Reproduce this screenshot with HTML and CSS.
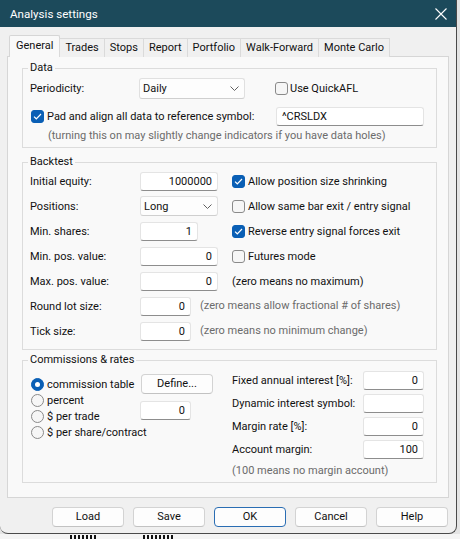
FILE: index.html
```html
<!DOCTYPE html>
<html>
<head>
<meta charset="utf-8">
<title>Analysis settings</title>
<link rel="stylesheet" href="styles.css">
</head>
<body>
<div class="window">
  <div class="titlebar">
    <span class="title">Analysis settings</span>
    <svg class="close" width="12" height="12" viewBox="0 0 12 12"><path d="M0.5 0.5L11.5 11.5M11.5 0.5L0.5 11.5" stroke="#ffffff" stroke-width="1.1" fill="none"/></svg>
  </div>
  <div class="client">
    <div class="tabs">
      <div class="tab active">General</div>
      <div class="tab">Trades</div>
      <div class="tab">Stops</div>
      <div class="tab">Report</div>
      <div class="tab">Portfolio</div>
      <div class="tab">Walk-Forward</div>
      <div class="tab">Monte Carlo</div>
    </div>
    <div class="panel">
      <fieldset class="group group-data">
        <legend>Data</legend>
        <div class="row r-period">
          <span class="lbl">Periodicity:</span>
          <div class="select w106"><span>Daily</span><svg class="chev" width="9" height="5" viewBox="0 0 9 5"><path d="M0.5 0.5L4.5 4.5L8.5 0.5" stroke="#606060" fill="none" stroke-width="1"/></svg></div>
          <label class="check quick"><span class="box"></span>Use QuickAFL</label>
        </div>
        <div class="row r-pad">
          <label class="check pad"><span class="box on"><svg width="9" height="7" viewBox="0 0 9 7"><path d="M1 3.6L3.3 5.8L8 1" stroke="#fff" stroke-width="1.2" fill="none"/></svg></span>Pad and align all data to reference symbol:</label>
          <div class="input w148 tleft">^CRSLDX</div>
        </div>
        <div class="hint hint-pad">(turning this on may slightly change indicators if you have data holes)</div>
      </fieldset>

      <fieldset class="group group-backtest">
        <legend>Backtest</legend>
        <div class="rows">
          <div class="brow">
            <span class="lbl">Initial equity:</span>
            <div class="cell"><div class="input w78">1000000</div></div>
            <label class="check"><span class="box on"><svg width="9" height="7" viewBox="0 0 9 7"><path d="M1 3.6L3.3 5.8L8 1" stroke="#fff" stroke-width="1.2" fill="none"/></svg></span>Allow position size shrinking</label>
          </div>
          <div class="brow">
            <span class="lbl">Positions:</span>
            <div class="cell"><div class="select w78"><span>Long</span><svg class="chev" width="9" height="5" viewBox="0 0 9 5"><path d="M0.5 0.5L4.5 4.5L8.5 0.5" stroke="#606060" fill="none" stroke-width="1"/></svg></div></div>
            <label class="check"><span class="box"></span>Allow same bar exit / entry signal</label>
          </div>
          <div class="brow">
            <span class="lbl">Min. shares:</span>
            <div class="cell"><div class="input w58">1</div></div>
            <label class="check"><span class="box on"><svg width="9" height="7" viewBox="0 0 9 7"><path d="M1 3.6L3.3 5.8L8 1" stroke="#fff" stroke-width="1.2" fill="none"/></svg></span>Reverse entry signal forces exit</label>
          </div>
          <div class="brow">
            <span class="lbl">Min. pos. value:</span>
            <div class="cell"><div class="input w78">0</div></div>
            <label class="check"><span class="box"></span>Futures mode</label>
          </div>
          <div class="brow">
            <span class="lbl">Max. pos. value:</span>
            <div class="cell"><div class="input w78">0</div></div>
            <span class="note">(zero means no maximum)</span>
          </div>
          <div class="brow">
            <span class="lbl">Round lot size:</span>
            <div class="input w51">0</div>
            <span class="hint side">(zero means allow fractional # of shares)</span>
          </div>
          <div class="brow">
            <span class="lbl">Tick size:</span>
            <div class="input w51">0</div>
            <span class="hint side">(zero means no minimum change)</span>
          </div>
        </div>
      </fieldset>

      <fieldset class="group group-comm">
        <legend>Commissions &amp; rates</legend>
        <div class="comm">
          <div class="comm-left">
            <label class="radio r1"><span class="dot on"></span>commission table</label>
            <div class="btn define">Define...</div>
            <label class="radio r2"><span class="dot"></span>percent</label>
            <label class="radio r3"><span class="dot"></span>$ per trade</label>
            <div class="input w51 trade">0</div>
            <label class="radio r4"><span class="dot"></span>$ per share/contract</label>
          </div>
          <div class="comm-right">
            <div class="crow"><span class="clbl">Fixed annual interest [%]:</span><div class="input w61">0</div></div>
            <div class="crow"><span class="clbl">Dynamic interest symbol:</span><div class="input w61"></div></div>
            <div class="crow"><span class="clbl">Margin rate [%]:</span><div class="input w61">0</div></div>
            <div class="crow"><span class="clbl">Account margin:</span><div class="input w61">100</div></div>
            <div class="hint hint-margin">(100 means no margin account)</div>
          </div>
        </div>
      </fieldset>
    </div>
    <div class="buttons">
      <div class="btn">Load</div>
      <div class="btn">Save</div>
      <div class="btn default">OK</div>
      <div class="btn">Cancel</div>
      <div class="btn">Help</div>
    </div>
  </div>
</div>
<div class="backdrop">
  <span class="bars b1"></span>
  <span class="bars b2"></span>
</div>
</body>
</html>
```

FILE: styles.css
```css
* { box-sizing: border-box; }
html, body { margin: 0; padding: 0; }
body {
  width: 460px;
  height: 539px;
  overflow: hidden;
  background: #e4e4e4;
  font-family: Roboto, "Noto Sans", "DejaVu Sans", sans-serif;
  font-size: 11px;
  color: #111;
}
.window {
  width: 457px;
  height: 534px;
  background: #f0f0f0;
  border-right: 1px solid #4a4a4a;
  border-bottom: 1px solid #4a4a4a;
  border-radius: 0 0 8px 8px;
  overflow: hidden;
  display: flex;
  flex-direction: column;
}
.titlebar {
  height: 27px;
  flex: none;
  background: #1c4a5b;
  color: #fff;
  display: flex;
  align-items: center;
  justify-content: space-between;
  padding: 0 9px 0 10px;
}
.title { font-size: 11.6px; }
.close { display: block; }
.client {
  flex: 1;
  padding: 9px 7px 0 7px;
  display: flex;
  flex-direction: column;
}
.tabs {
  display: flex;
  align-items: flex-end;
  height: 21px;
  padding-left: 3px;
  position: relative;
  z-index: 1;
}
.tab {
  height: 19px;
  line-height: 18px;
  padding: 0 5px;
  border: 1px solid #dadada;
  border-bottom: none;
  margin-left: -1px;
  background: #f0f0f0;
  white-space: nowrap;
}
.tab.active {
  height: 22px;
  line-height: 19px;
  padding: 0 6px 2px;
  background: #f9f9f9;
  border-color: #d6d6d6;
  border-radius: 2px 2px 0 0;
}
.panel {
  height: 442px;
  margin-top: -1px;
  border: 1px solid #d6d6d6;
  background: #f9f9f9;
  padding: 4px 11px 0 14px;
}
.group {
  margin: 0;
  border: 1px solid #dcdcdc;
  padding: 0 0 4px 7px;
  min-width: 0;
}
.group legend {
  padding: 0 2px;
  margin-left: -2px;
  line-height: 14px;
}
.group-backtest { margin-top: 7px; padding-bottom: 8px; }
.group-comm { margin-top: 3px; padding-bottom: 4px; }

.row { display: flex; align-items: center; }
.r-period { height: 21px; margin-top: 3px; }
.r-pad { height: 19px; margin-top: 8px; }
.lbl { width: 109px; flex: none; white-space: nowrap; }
.hint { color: #6b6b6b; line-height: 14px; white-space: nowrap; }
.hint-pad { margin-top: 3px; padding-left: 18px; }

.check { display: flex; align-items: center; white-space: nowrap; }
.check .box {
  width: 13px; height: 13px; flex: none;
  border: 1px solid #8a8a8a;
  border-radius: 3px;
  background: #f6f6f6;
  margin-right: 3px;
  display: flex; align-items: center; justify-content: center;
}
.check .box.on { background: #0a5fb5; border-color: #0a5fb5; }
.quick { margin-left: 30px; }
.quick .box { margin-right: 2px; }
.pad { width: 245px; margin-left: 1px; flex: none; }

.input {
  height: 19px;
  flex: none;
  background: #fff;
  border: 1px solid #e4e4e4;
  border-bottom-color: #8d8d8d;
  border-radius: 3px;
  padding: 0 5px;
  text-align: right;
  line-height: 17px;
  white-space: nowrap;
}
.tleft { text-align: left; }
.select {
  height: 21px;
  flex: none;
  background: #fdfdfd;
  border: 1px solid #e0e0e0;
  border-bottom-color: #cfcfcf;
  border-radius: 3px;
  padding: 0 5px 0 3px;
  display: flex;
  align-items: center;
  justify-content: space-between;
}
.chev { display: block; }
.w106 { width: 106px; }
.w148 { width: 148px; }
.w78 { width: 78px; }
.w58 { width: 58px; }
.w51 { width: 51px; }
.w61 { width: 61px; }
.group-backtest .select { height: 20px; }

.rows { display: flex; flex-direction: column; gap: 5px; margin-top: 2px; }
.brow { display: flex; align-items: center; height: 20px; }
.brow .lbl { width: 110px; }
.cell { width: 92px; flex: none; }
.brow .check .box { margin-right: 3px; }
.side { margin-left: 9px; }
.note { white-space: nowrap; }

.comm { display: flex; margin-top: 3px; }
.comm-left {
  width: 202px;
  flex: none;
  display: grid;
  grid-template-columns: 110px 92px;
  grid-template-rows: repeat(4, 16px);
  padding-top: 6px;
}
.radio { display: flex; align-items: center; white-space: nowrap; grid-column: 1; }
.r1 { grid-row: 1; }
.r2 { grid-row: 2; }
.r3 { grid-row: 3; }
.r4 { grid-row: 4; grid-column: 1 / span 2; }
.radio .dot {
  width: 13px; height: 13px; flex: none;
  border-radius: 50%;
  border: 1px solid #8a8a8a;
  background: #f6f6f6;
  margin: 0 3px 0 1px;
  display: flex; align-items: center; justify-content: center;
}
.radio .dot.on { background: #0a5fb5; border-color: #0a5fb5; }
.radio .dot.on::after {
  content: "";
  width: 5px; height: 5px;
  border-radius: 50%;
  background: #fff;
}
.define {
  grid-row: 1; grid-column: 2;
  width: 77px;
  margin-left: 1px;
  align-self: center;
  height: 20px;
  line-height: 18px;
}
.trade { grid-row: 3; grid-column: 2; align-self: start; margin-top: -7px; }
.comm-right { width: 192px; display: flex; flex-direction: column; gap: 3px; }
.crow { display: flex; align-items: center; height: 20px; }
.clbl { width: 131px; flex: none; white-space: nowrap; }
.hint-margin { margin-top: 2px; }

.buttons {
  display: flex;
  justify-content: flex-end;
  gap: 9px;
  margin-top: 9px;
  padding-right: 1px;
}
.btn {
  width: 72px;
  height: 20px;
  background: #fdfdfd;
  border: 1px solid #d3d3d3;
  border-bottom-color: #c2c2c2;
  border-radius: 4px;
  text-align: center;
  line-height: 18px;
}
.btn.default { border-color: #2a6db3; }

.backdrop {
  height: 5px;
  background: #f4f4f4;
  display: flex;
  align-items: flex-end;
}
.bars {
  height: 4px;
  background: repeating-linear-gradient(90deg, #111 0 2px, #f4f4f4 2px 4px);
}
.b1 { width: 27px; margin-left: 70px; }
.b2 { width: 30px; margin-left: 46px; }
```
